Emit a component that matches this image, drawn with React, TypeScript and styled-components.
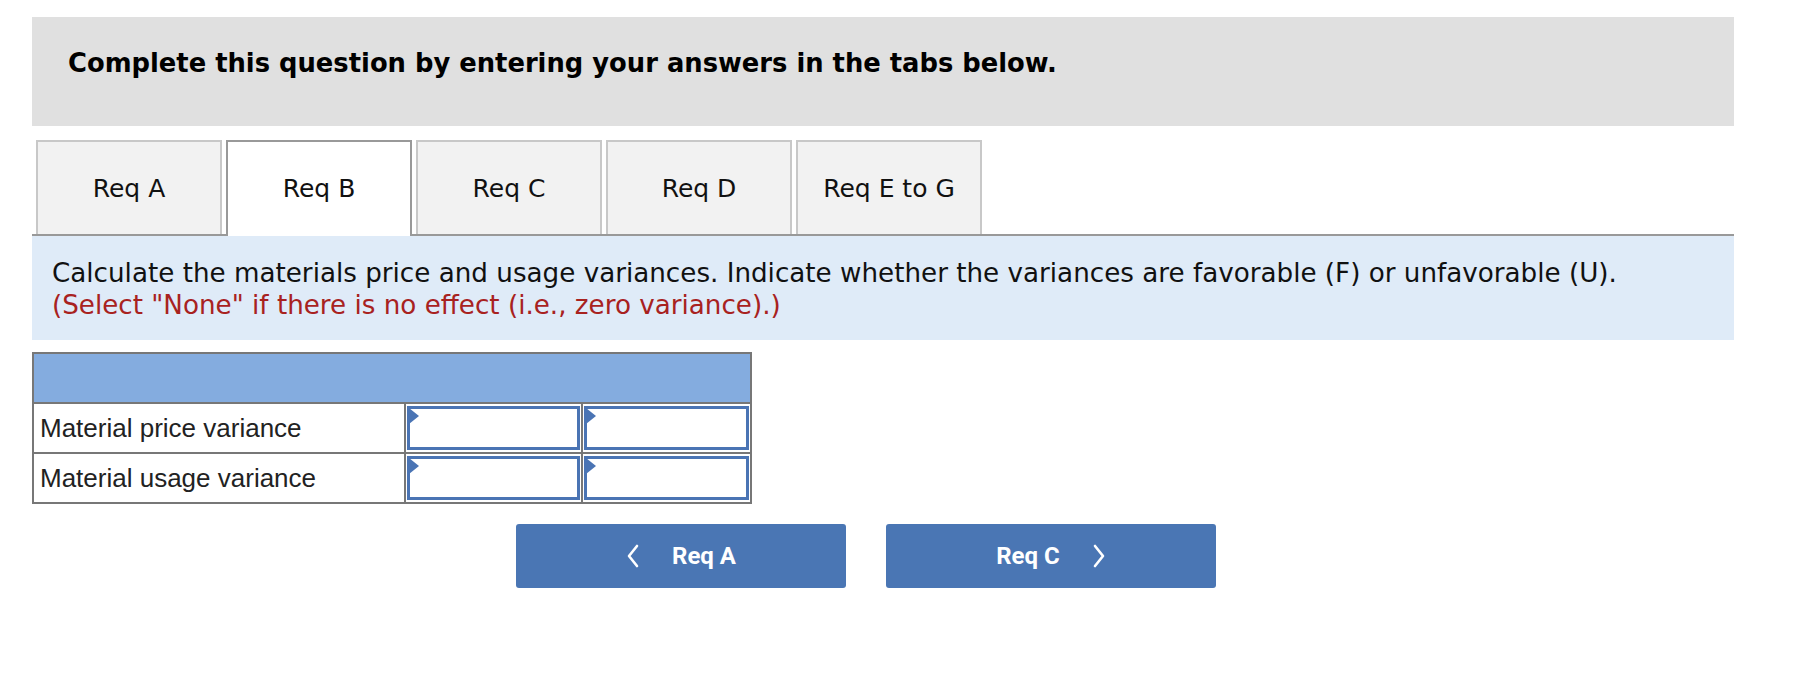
import React from "react";
import styled, { createGlobalStyle } from "styled-components";

const Global = createGlobalStyle`
  html, body { margin: 0; padding: 0; background: #ffffff; }
  body { font-family: "DejaVu Sans", Verdana, sans-serif; color: #000; }
  * { box-sizing: border-box; }
`;

const Page = styled.div`
  width: 1814px;
  height: 696px;
  padding: 17px 0 0 32px;
`;

const Container = styled.div`
  width: 1702px;
  display: flex;
  flex-direction: column;
`;

const Banner = styled.div`
  height: 109px;
  background: #e0e0e0;
  padding: 30px 36px 0;
  font-family: "DejaVu Sans", Verdana, sans-serif;
  font-weight: bold;
  font-size: 25.8px;
  line-height: 32px;
  color: #000;
  white-space: nowrap;
`;

const TabBar = styled.div`
  margin-top: 14px;
  display: flex;
  align-items: flex-end;
  gap: 4px;
  padding-left: 4px;
  height: 96px;
  border-bottom: 2px solid #999999;
`;

const Tab = styled.div<{ $active?: boolean }>`
  width: 186px;
  height: ${(p) => (p.$active ? "96px" : "94px")};
  margin-bottom: ${(p) => (p.$active ? "-2px" : "0")};
  background: ${(p) => (p.$active ? "#ffffff" : "#f2f2f2")};
  border: 2px solid ${(p) => (p.$active ? "#999999" : "#c8c8c8")};
  border-bottom: none;
  display: flex;
  align-items: center;
  justify-content: center;
  padding-bottom: ${(p) => (p.$active ? "2px" : "0")};
  font-family: "DejaVu Sans", Verdana, sans-serif;
  font-size: 25px;
  color: #111;
  position: relative;
  z-index: 1;
  white-space: nowrap;
`;

const Info = styled.div`
  background: #dfebf8;
  padding: 21px 20px 19px;
  font-family: "DejaVu Sans", Verdana, sans-serif;
  font-size: 26.2px;
  line-height: 32px;
  color: #111;
`;

const Line = styled.div<{ $red?: boolean }>`
  color: ${(p) => (p.$red ? "#a8221f" : "#111111")};
  white-space: nowrap;
`;

const Grid = styled.table`
  margin-top: 12px;
  width: 720px;
  border-collapse: collapse;
  border: 2px solid #777777;
  font-family: "Liberation Sans", Arial, sans-serif;
  font-size: 26px;
  color: #222;
`;

const HeadCell = styled.td`
  height: 50px;
  background: #84acdf;
  border: 2px solid #777777;
  padding: 0;
`;

const LabelCell = styled.td`
  height: 50px;
  width: 372px;
  border: 2px solid #777777;
  padding: 0 0 0 6px;
  background: #fff;
  white-space: nowrap;
`;

const InputCell = styled.td<{ $w: number }>`
  height: 50px;
  width: ${(p) => p.$w}px;
  border: 2px solid #777777;
  padding: 1px;
  background: #fff;
`;

const InputBox = styled.div`
  position: relative;
  height: 44px;
  border: 3px solid #4a74b4;
  background: #fff;
`;

const Marker = styled.span`
  position: absolute;
  left: -1px;
  top: -1px;
  width: 0;
  height: 0;
  border-top: 8px solid transparent;
  border-bottom: 8px solid transparent;
  border-left: 10px solid #4a74b4;
`;

const NavRow = styled.div`
  margin-top: 20px;
  display: flex;
  gap: 40px;
  padding-left: 484px;
`;

const NavButton = styled.button`
  width: 330px;
  height: 64px;
  border: none;
  border-radius: 3px;
  background: #4a76b4;
  color: #ffffff;
  display: flex;
  align-items: center;
  justify-content: center;
  gap: 32px;
  font-family: Roboto, "Liberation Sans", Arial, sans-serif;
  font-weight: bold;
  font-size: 24px;
  cursor: pointer;
  padding: 0;
`;

const Chevron = ({ dir }: { dir: "left" | "right" }) => (
  <svg width="14" height="24" viewBox="0 0 14 24" fill="none">
    <path
      d={dir === "left" ? "M11 2 L3 12 L11 22" : "M3 2 L11 12 L3 22"}
      stroke="#ffffff"
      strokeWidth="2.6"
      strokeLinecap="round"
      strokeLinejoin="round"
    />
  </svg>
);

const tabs = ["Req A", "Req B", "Req C", "Req D", "Req E to G"];
const rows = ["Material price variance", "Material usage variance"];

export default function App() {
  return (
    <>
      <Global />
      <Page>
        <Container>
          <Banner>Complete this question by entering your answers in the tabs below.</Banner>
          <TabBar>
            {tabs.map((t) => (
              <Tab key={t} $active={t === "Req B"}>
                {t}
              </Tab>
            ))}
          </TabBar>
          <Info>
            <Line>
              Calculate the materials price and usage variances. Indicate whether the variances are favorable (F) or unfavorable (U).
            </Line>
            <Line $red>(Select "None" if there is no effect (i.e., zero variance).)</Line>
          </Info>
          <Grid>
            <tbody>
              <tr>
                <HeadCell colSpan={3} />
              </tr>
              {rows.map((r) => (
                <tr key={r}>
                  <LabelCell>{r}</LabelCell>
                  <InputCell $w={178}>
                    <InputBox>
                      <Marker />
                    </InputBox>
                  </InputCell>
                  <InputCell $w={170}>
                    <InputBox>
                      <Marker />
                    </InputBox>
                  </InputCell>
                </tr>
              ))}
            </tbody>
          </Grid>
          <NavRow>
            <NavButton>
              <Chevron dir="left" />
              <span>Req A</span>
            </NavButton>
            <NavButton>
              <span>Req C</span>
              <Chevron dir="right" />
            </NavButton>
          </NavRow>
        </Container>
      </Page>
    </>
  );
}
